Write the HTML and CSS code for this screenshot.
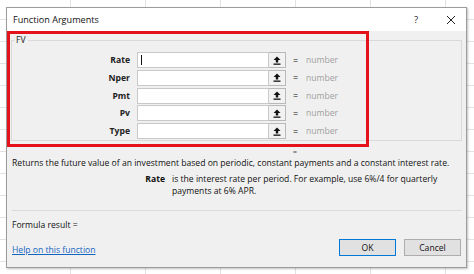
FILE: index.html
```html
<!DOCTYPE html>
<html>
<head>
<meta charset="utf-8">
<link rel="stylesheet" href="styles.css">
</head>
<body>
<div class="dialog">
  <div class="titlebar">
    <span class="title">Function Arguments</span>
    <span class="tb-icons">
      <span class="help">?</span>
      <svg class="close" width="10" height="10" viewBox="0 0 10 10"><path d="M1 1L9 9M9 1L1 9" stroke="#222" stroke-width="1" fill="none"/></svg>
    </span>
  </div>
  <div class="content">
    <fieldset class="group">
      <legend>FV</legend>
      <div class="rows">
        <label>Rate</label>
        <div class="field"><div class="input"><span class="caret"></span></div><div class="pick"><svg width="8" height="9" viewBox="0 0 8 9"><path d="M4 0.5L7.5 4H5.2V6.5H2.8V4H0.5Z" fill="#111"/><rect x="0.5" y="7.5" width="7" height="1.3" fill="#111"/></svg></div></div>
        <span class="eq">=</span><span class="val">number</span>

        <label>Nper</label>
        <div class="field"><div class="input"></div><div class="pick"><svg width="8" height="9" viewBox="0 0 8 9"><path d="M4 0.5L7.5 4H5.2V6.5H2.8V4H0.5Z" fill="#111"/><rect x="0.5" y="7.5" width="7" height="1.3" fill="#111"/></svg></div></div>
        <span class="eq">=</span><span class="val">number</span>

        <label>Pmt</label>
        <div class="field"><div class="input"></div><div class="pick"><svg width="8" height="9" viewBox="0 0 8 9"><path d="M4 0.5L7.5 4H5.2V6.5H2.8V4H0.5Z" fill="#111"/><rect x="0.5" y="7.5" width="7" height="1.3" fill="#111"/></svg></div></div>
        <span class="eq">=</span><span class="val">number</span>

        <label>Pv</label>
        <div class="field"><div class="input"></div><div class="pick"><svg width="8" height="9" viewBox="0 0 8 9"><path d="M4 0.5L7.5 4H5.2V6.5H2.8V4H0.5Z" fill="#111"/><rect x="0.5" y="7.5" width="7" height="1.3" fill="#111"/></svg></div></div>
        <span class="eq">=</span><span class="val">number</span>

        <label>Type</label>
        <div class="field"><div class="input"></div><div class="pick"><svg width="8" height="9" viewBox="0 0 8 9"><path d="M4 0.5L7.5 4H5.2V6.5H2.8V4H0.5Z" fill="#111"/><rect x="0.5" y="7.5" width="7" height="1.3" fill="#111"/></svg></div></div>
        <span class="eq">=</span><span class="val">number</span>
      </div>
    </fieldset>
    <div class="result-eq">=</div>
    <p class="desc">Returns the future value of an investment based on periodic, constant payments and a constant interest rate.</p>
    <div class="argdesc">
      <span class="argname">Rate</span>
      <span class="argtext">is the interest rate per period. For example, use 6%/4 for quarterly<br>payments at 6% APR.</span>
    </div>
    <hr class="sep">
    <div class="formula">Formula result =</div>
    <div class="footer">
      <a class="helplink" href="#">Help on this function</a>
      <div class="buttons">
        <button class="btn ok">OK</button>
        <button class="btn">Cancel</button>
      </div>
    </div>
  </div>
  <div class="highlight"></div>
</div>
</body>
</html>
```
FILE: styles.css
```css
html, body {
  margin: 0;
}
body {
  width: 474px;
  height: 274px;
  overflow: hidden;
  box-sizing: border-box;
  padding: 7px 0 0 6px;
  background-color: #ffffff;
  background-image:
    repeating-linear-gradient(to right, transparent 0, transparent 74px, #e2e2e2 74px, #e2e2e2 75px),
    repeating-linear-gradient(to bottom, transparent 0, transparent 21px, #e2e2e2 21px, #e2e2e2 22px);
  background-position: -4px 0, 0 -2px;
  font-family: "Open Sans", "Noto Sans", sans-serif;
  color: #1a1a1a;
}
.dialog {
  position: relative;
  width: 461px;
  height: 261px;
  box-sizing: border-box;
  border: 1px solid #9c9c9c;
  background: #f0f0f0;
  box-shadow: 1px 1px 2px rgba(0,0,0,0.25);
  display: flex;
  flex-direction: column;
}
.titlebar {
  height: 23px;
  background: #ffffff;
  display: flex;
  align-items: center;
  justify-content: space-between;
  padding: 0 10px 0 6px;
  flex: none;
}
.title {
  font-size: 9.1px;
  color: #111;
  margin-top: -1px;
}
.tb-icons {
  display: flex;
  align-items: center;
  gap: 28px;
}
.help {
  font-size: 9.5px;
  color: #222;
}
.close {
  display: block;
}
.content {
  padding: 0 4px;
  display: flex;
  flex-direction: column;
  flex: 1;
}
.group {
  margin: 4px 0 0 0;
  padding: 7px 0 1px 0;
  border: 1px solid #d9d9d9;
  min-width: 0;
}
.group legend {
  font-size: 8.6px;
  line-height: 10px;
  padding: 0 2px;
  margin-left: 2px;
  color: #222;
}
.rows {
  display: grid;
  grid-template-columns: 118px 149px 5px auto;
  grid-auto-rows: 16px;
  row-gap: 1.75px;
  column-gap: 7px;
  align-items: center;
}
.rows label {
  text-align: right;
  font-weight: bold;
  font-size: 8.6px;
  color: #222;
}
.field {
  display: flex;
  height: 16px;
}
.input {
  width: 132px;
  box-sizing: border-box;
  border: 1px solid #c9c9c9;
  background: #fff;
  display: flex;
  align-items: center;
  padding-left: 3px;
}
.caret {
  width: 1px;
  height: 10px;
  background: #111;
}
.pick {
  width: 17px;
  box-sizing: border-box;
  border: 1px solid #b9b9b9;
  border-left: none;
  background: #f2f2f2;
  display: flex;
  align-items: center;
  justify-content: center;
}
.pick svg {
  display: block;
}
.eq {
  font-size: 8px;
  color: #777;
  text-align: center;
  font-weight: bold;
}
.val {
  font-size: 8.6px;
  color: #a0a0a0;
  margin-left: 1px;
}
.result-eq {
  font-size: 7px;
  color: #444;
  height: 6px;
  line-height: 6px;
  margin: 8px 0 0 282px;
}
.desc {
  margin: 3px 0 0 1px;
  font-size: 8.6px;
  line-height: 11px;
  color: #111;
  white-space: nowrap;
}
.argdesc {
  display: grid;
  grid-template-columns: 154px auto;
  column-gap: 7px;
  margin-top: 5px;
  font-size: 8.6px;
  line-height: 11.6px;
  color: #111;
}
.argname {
  text-align: right;
  font-weight: bold;
}
.sep {
  margin: 13px 0 0 1px;
  border: none;
  border-top: 1px solid #dadada;
  height: 0;
}
.formula {
  margin: 9px 0 0 1px;
  font-size: 8.6px;
  line-height: 11px;
  color: #111;
}
.footer {
  margin-top: 8px;
  display: flex;
  justify-content: space-between;
  align-items: center;
  padding-left: 1px;
  padding-right: 1px;
}
.helplink {
  font-size: 8.6px;
  color: #1565c0;
  text-decoration: underline;
  margin-top: 5px;
}
.buttons {
  display: flex;
  gap: 8px;
}
.btn {
  width: 57px;
  height: 17px;
  box-sizing: border-box;
  border: 1px solid #adadad;
  background: #e1e1e1;
  font-family: "Open Sans", "Noto Sans", sans-serif;
  font-size: 8.6px;
  color: #111;
  padding: 0;
}
.btn.ok {
  border-color: #0078d7;
}
.highlight {
  position: absolute;
  left: 0;
  top: 23px;
  width: 362px;
  height: 116px;
  box-sizing: border-box;
  border: 3px solid #e3121b;
  pointer-events: none;
}
```
